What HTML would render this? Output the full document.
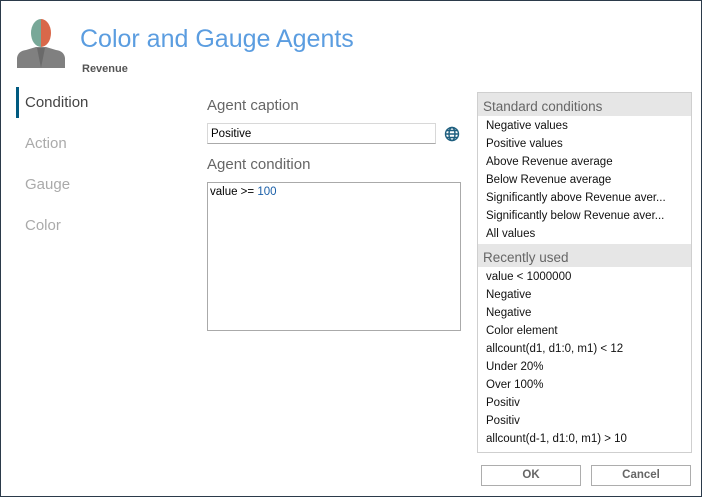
<!DOCTYPE html>
<html><head><style>
body{margin:0;width:702px;height:497px;overflow:hidden;background:#fff;font-family:"Liberation Sans",sans-serif;}
.win{position:absolute;left:0;top:0;width:700px;height:495px;border:1px solid #2b3a4a;background:#fff;}
.a{position:absolute;}
.title{left:79px;top:24px;font-size:25px;color:#5b9de0;font-weight:normal;}
.sub{left:81px;top:62px;font-size:11px;font-weight:bold;color:#555}
.nav{left:24px;font-size:15px;color:#aaa}
.lbl{font-size:15px;color:#666}
.list{left:476px;top:91px;width:213px;height:359px;border:1px solid #cfcfcf;font-size:11.5px;color:#111}
.hd{background:#e6e6e6;height:23px;line-height:27px;padding-left:5px;font-size:13.5px;color:#666;}
.it{height:18px;line-height:20px;padding-left:8px;white-space:nowrap}
.btn{top:464px;width:98px;height:19px;border:1px solid #adadad;font-size:11.5px;font-weight:bold;color:#666;text-align:center;line-height:19px}
</style></head><body><div class="win">
<svg class="a" style="left:15px;top:17px" width="50" height="50" viewBox="0 0 50 50">
<path d="M1 50 L1 40 Q2 33 10 32 L20 29 L30 29 L40 32 Q48 33 49 40 L49 50Z" fill="#808080"/>
<path d="M21 30 L25 50 L29 30Z" fill="#6a6a6a"/>
<path d="M25 1 A10 14 0 0 0 25 29Z" fill="#78a898"/>
<path d="M25 1 A10 14 0 0 1 25 29Z" fill="#d9684a"/>
</svg>
<div class="a title">Color and Gauge Agents</div>
<div class="a sub">Revenue</div>
<div class="a" style="left:15px;top:86px;width:3px;height:31px;background:#005a80"></div>
<div class="a nav" style="top:93px;color:#444">Condition</div>
<div class="a nav" style="top:134px">Action</div>
<div class="a nav" style="top:175px">Gauge</div>
<div class="a nav" style="top:216px">Color</div>
<div class="a lbl" style="left:206px;top:96px">Agent caption</div>
<div class="a" style="left:206px;top:122px;height:21px;border:1px solid #d8d8d8;border-bottom-color:#aaa;font-size:11.5px;line-height:21px;padding-left:3px;box-sizing:border-box;width:229px">Positive</div>
<svg class="a" style="left:443px;top:125px" width="16" height="16" viewBox="0 0 16 16" fill="none" stroke="#1f5f7f" stroke-width="1.4"><circle cx="8" cy="8" r="6.5"/><ellipse cx="8" cy="8" rx="3" ry="6.5"/><path d="M1.5 8h13M2.5 4.5h11M2.5 11.5h11"/></svg>
<div class="a lbl" style="left:206px;top:155px">Agent condition</div>
<div class="a" style="left:206px;top:181px;width:254px;height:149px;border:1px solid #aaa;box-sizing:border-box;font-size:11.5px;padding:3px 2px">value &gt;= <span style="color:#1a5fa8">100</span></div>
<div class="a list">
<div class="hd">Standard conditions</div>
<div class="it">Negative values</div><div class="it">Positive values</div><div class="it">Above Revenue average</div><div class="it">Below Revenue average</div><div class="it">Significantly above Revenue aver...</div><div class="it">Significantly below Revenue aver...</div><div class="it">All values</div>
<div class="hd" style="margin-top:2px">Recently used</div>
<div class="it">value &lt; 1000000</div><div class="it">Negative</div><div class="it">Negative</div><div class="it">Color element</div><div class="it">allcount(d1, d1:0, m1) &lt; 12</div><div class="it">Under 20%</div><div class="it">Over 100%</div><div class="it">Positiv</div><div class="it">Positiv</div><div class="it">allcount(d-1, d1:0, m1) &gt; 10</div>
</div>
<div class="a btn" style="left:480px">OK</div>
<div class="a btn" style="left:590px">Cancel</div>
</div></body></html>
